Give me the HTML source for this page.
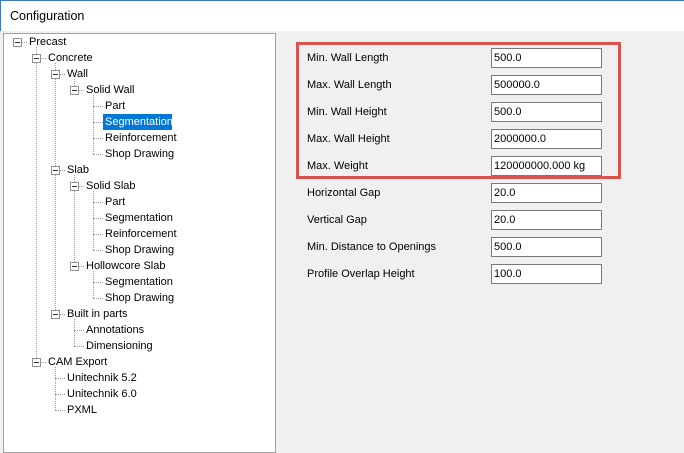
<!DOCTYPE html>
<html><head><meta charset="utf-8"><style>
*{margin:0;padding:0;box-sizing:border-box}
body{width:684px;height:437px;overflow:hidden;background:#f0f0f0;font-family:"Liberation Sans",Arial,sans-serif;font-size:11px;color:#000;position:relative}
.title{position:absolute;left:0;top:0;width:684px;height:31px;background:#fff;border-top:1px solid #3a7ab8;border-left:1px solid #3a7ab8}
.title span{position:absolute;left:9px;top:8px;font-size:12.5px}
.tree{position:absolute;left:3px;top:33px;width:273px;height:420px;background:#fff;border:1px solid #a0a0a0}
.t{position:absolute;line-height:16px;height:16px;white-space:nowrap;padding:0 1px}
.sel{background:#0078d7;color:#fff}
.b{position:absolute;width:9px;height:9px;border:1px solid #919191;background:#fff}
.b:after{content:"";position:absolute;left:1px;top:3px;width:5px;height:1px;background:#333}
.h{position:absolute;height:1px;border-top:1px dotted #a0a0a0}
.v{position:absolute;width:1px;border-left:1px dotted #a0a0a0}
.lbl{position:absolute;left:307px;line-height:16px}
.in{position:absolute;left:491px;width:111px;height:20px;background:#fff;border:1px solid #7a7a7a;padding:3px 0 0 2px;line-height:13px}
.red{position:absolute;left:296px;top:42px;width:325px;height:137px;border:3px solid #d9534f}
</style></head><body>
<div class="title"><span>Configuration</span></div>
<div class="tree"></div>
<div style="position:absolute;left:0;top:0">
<div class="v" style="left:36px;top:47px;height:315px"></div>
<div class="v" style="left:55px;top:63px;height:251px"></div>
<div class="v" style="left:74px;top:79px;height:11px"></div>
<div class="v" style="left:93px;top:95px;height:59px"></div>
<div class="v" style="left:74px;top:175px;height:91px"></div>
<div class="v" style="left:93px;top:191px;height:59px"></div>
<div class="v" style="left:93px;top:271px;height:27px"></div>
<div class="v" style="left:74px;top:319px;height:27px"></div>
<div class="v" style="left:55px;top:367px;height:43px"></div>
<div class="h" style="left:17px;top:42px;width:10px"></div>
<div class="h" style="left:36px;top:58px;width:10px"></div>
<div class="h" style="left:55px;top:74px;width:10px"></div>
<div class="h" style="left:74px;top:90px;width:10px"></div>
<div class="h" style="left:93px;top:106px;width:10px"></div>
<div class="h" style="left:93px;top:122px;width:10px"></div>
<div class="h" style="left:93px;top:138px;width:10px"></div>
<div class="h" style="left:93px;top:154px;width:10px"></div>
<div class="h" style="left:55px;top:170px;width:10px"></div>
<div class="h" style="left:74px;top:186px;width:10px"></div>
<div class="h" style="left:93px;top:202px;width:10px"></div>
<div class="h" style="left:93px;top:218px;width:10px"></div>
<div class="h" style="left:93px;top:234px;width:10px"></div>
<div class="h" style="left:93px;top:250px;width:10px"></div>
<div class="h" style="left:74px;top:266px;width:10px"></div>
<div class="h" style="left:93px;top:282px;width:10px"></div>
<div class="h" style="left:93px;top:298px;width:10px"></div>
<div class="h" style="left:55px;top:314px;width:10px"></div>
<div class="h" style="left:74px;top:330px;width:10px"></div>
<div class="h" style="left:74px;top:346px;width:10px"></div>
<div class="h" style="left:36px;top:362px;width:10px"></div>
<div class="h" style="left:55px;top:378px;width:10px"></div>
<div class="h" style="left:55px;top:394px;width:10px"></div>
<div class="h" style="left:55px;top:410px;width:10px"></div>
<div class="b" style="left:13px;top:38px"></div>
<div class="b" style="left:32px;top:54px"></div>
<div class="b" style="left:51px;top:70px"></div>
<div class="b" style="left:70px;top:86px"></div>
<div class="b" style="left:51px;top:166px"></div>
<div class="b" style="left:70px;top:182px"></div>
<div class="b" style="left:70px;top:262px"></div>
<div class="b" style="left:51px;top:310px"></div>
<div class="b" style="left:32px;top:358px"></div>
<div class="t" style="left:28px;top:34px">Precast</div>
<div class="t" style="left:47px;top:50px">Concrete</div>
<div class="t" style="left:66px;top:66px">Wall</div>
<div class="t" style="left:85px;top:82px">Solid Wall</div>
<div class="t" style="left:104px;top:98px">Part</div>
<div class="t sel" style="left:103px;top:114px;padding:0 2px;width:69px">Segmentation</div>
<div class="t" style="left:104px;top:130px">Reinforcement</div>
<div class="t" style="left:104px;top:146px">Shop Drawing</div>
<div class="t" style="left:66px;top:162px">Slab</div>
<div class="t" style="left:85px;top:178px">Solid Slab</div>
<div class="t" style="left:104px;top:194px">Part</div>
<div class="t" style="left:104px;top:210px">Segmentation</div>
<div class="t" style="left:104px;top:226px">Reinforcement</div>
<div class="t" style="left:104px;top:242px">Shop Drawing</div>
<div class="t" style="left:85px;top:258px">Hollowcore Slab</div>
<div class="t" style="left:104px;top:274px">Segmentation</div>
<div class="t" style="left:104px;top:290px">Shop Drawing</div>
<div class="t" style="left:66px;top:306px">Built in parts</div>
<div class="t" style="left:85px;top:322px">Annotations</div>
<div class="t" style="left:85px;top:338px">Dimensioning</div>
<div class="t" style="left:47px;top:354px">CAM Export</div>
<div class="t" style="left:66px;top:370px">Unitechnik 5.2</div>
<div class="t" style="left:66px;top:386px">Unitechnik 6.0</div>
<div class="t" style="left:66px;top:402px">PXML</div>
</div>
<div class="red"></div>
<div class="lbl" style="top:50px">Min. Wall Length</div><div class="in" style="top:48px">500.0</div>
<div class="lbl" style="top:77px">Max. Wall Length</div><div class="in" style="top:75px">500000.0</div>
<div class="lbl" style="top:104px">Min. Wall Height</div><div class="in" style="top:102px">500.0</div>
<div class="lbl" style="top:131px">Max. Wall Height</div><div class="in" style="top:129px">2000000.0</div>
<div class="lbl" style="top:158px">Max. Weight</div><div class="in" style="top:156px">120000000.000 kg</div>
<div class="lbl" style="top:185px">Horizontal Gap</div><div class="in" style="top:183px">20.0</div>
<div class="lbl" style="top:212px">Vertical Gap</div><div class="in" style="top:210px">20.0</div>
<div class="lbl" style="top:239px">Min. Distance to Openings</div><div class="in" style="top:237px">500.0</div>
<div class="lbl" style="top:266px">Profile Overlap Height</div><div class="in" style="top:264px">100.0</div>
</body></html>
